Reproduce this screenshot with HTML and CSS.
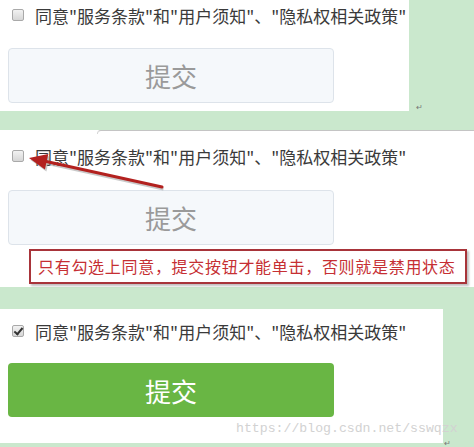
FILE: index.html
```html
<!DOCTYPE html>
<html>
<head>
    <meta charset="utf-8" />
    <title>同意条款后才能提交</title>
    <link rel="stylesheet" href="styles.css">
</head>
<body>
<div class="shot shot-one">
    <label class="agree">
        <input type="checkbox" class="box" />
        <span>同意"服务条款"和"用户须知"、"隐私权相关政策"</span>
    </label>
    <button class="submit" disabled>提交</button>
    <span class="ret ret-one">↵</span>
</div>

<div class="shot shot-two">
    <div class="edge"></div>
    <label class="agree">
        <input type="checkbox" class="box" />
        <span>同意"服务条款"和"用户须知"、"隐私权相关政策"</span>
    </label>
    <button class="submit" disabled>提交</button>
    <div class="note">只有勾选上同意，提交按钮才能单击，否则就是禁用状态</div>

    <svg class="pointer" width="474" height="157" viewBox="0 130 474 157">
        <g transform="translate(1.5 2)" fill="#8a8a8a" stroke="#8a8a8a" opacity="0.45">
            <line x1="162" y1="187" x2="44" y2="161" stroke-width="3" />
            <polygon points="29,158 48.3,154 44.9,169.6" stroke="none" />
        </g>
        <line x1="162" y1="187" x2="44" y2="161" stroke="#b3211f" stroke-width="3" stroke-linecap="round" />
        <polygon points="29,158 48.3,154 44.9,169.6" fill="#b3211f" />
    </svg>
</div>

<div class="shot shot-three">
    <label class="agree">
        <input type="checkbox" class="box" checked />
        <span>同意"服务条款"和"用户须知"、"隐私权相关政策"</span>
    </label>
    <button class="submit on">提交</button>
    <span class="mark">https://blog.csdn.net/sswqzx</span>
    <span class="ret ret-three">↵</span>
</div>
</body>
</html>
```

FILE: styles.css
```css
* {
    margin: 0;
    padding: 0;
    box-sizing: border-box;
}

body {
    width: 474px;
    height: 447px;
    overflow: hidden;
    background: #cae8cd;
    font-family: "Noto Sans CJK SC", "Noto Sans", sans-serif;
}

.shot {
    position: relative;
    background: #fff;
}

.shot-one {
    width: 409px;
    height: 111px;
    padding-top: 3px;
}

.shot-two {
    margin-top: 19px;
    height: 157px;
}

.shot-three {
    margin-top: 22px;
    width: 443px;
    height: 134px;
    padding-top: 10px;
}

.edge {
    height: 4px;
    margin: 0 0 10px 97px;
    border-top: 1px solid #c4c4c4;
    border-left: 1px solid #d4d4d4;
    border-top-left-radius: 4px;
}

.agree {
    display: flex;
    align-items: center;
    height: 24px;
    padding-left: 12px;
    font-size: 17px;
    color: #3a3a3a;
    white-space: nowrap;
}

.agree span {
    margin-left: 11px;
}

.box {
    appearance: none;
    -webkit-appearance: none;
    width: 12px;
    height: 12px;
    border: 1px solid #a9a9a9;
    border-radius: 2px;
    background: linear-gradient(#f2f2f2, #d6d6d6);
    position: relative;
}

.box:checked::after {
    content: "";
    position: absolute;
    left: 3px;
    top: 0px;
    width: 3px;
    height: 7px;
    border: solid #333;
    border-width: 0 2px 2px 0;
    transform: rotate(40deg);
}

.submit {
    display: block;
    width: 326px;
    height: 55px;
    margin: 21px 0 0 8px;
    border: 1px solid #dde3ea;
    border-radius: 4px;
    background: #f5f8fb;
    color: #9a9a9a;
    font-family: inherit;
    font-size: 26px;
}

.shot-two .submit {
    margin-top: 22px;
}

.shot-three .submit {
    margin-top: 20px;
    height: 54px;
    border: none;
    background: #69b644;
    color: #fff;
}

.note {
    width: 438px;
    height: 35px;
    margin: 4px 0 0 29px;
    border: 2px solid #a8343a;
    background: #fff;
    box-shadow: 2px 2px 2px rgba(0, 0, 0, .25);
    color: #c62f33;
    font-size: 16px;
    line-height: 31px;
    letter-spacing: 0.7px;
    padding-left: 7px;
    white-space: nowrap;
}

.pointer {
    position: absolute;
    left: 0;
    top: 0;
    pointer-events: none;
}

.mark {
    position: absolute;
    left: 236px;
    top: 112px;
    font-family: "Liberation Mono", monospace;
    font-size: 13.2px;
    line-height: 16px;
    color: #d2d2d2;
    white-space: nowrap;
}

.ret {
    position: absolute;
    font-size: 8px;
    line-height: 8px;
    color: #777;
}

.ret-one {
    left: 416px;
    top: 103px;
}

.ret-three {
    left: 444px;
    top: 130px;
}
```
